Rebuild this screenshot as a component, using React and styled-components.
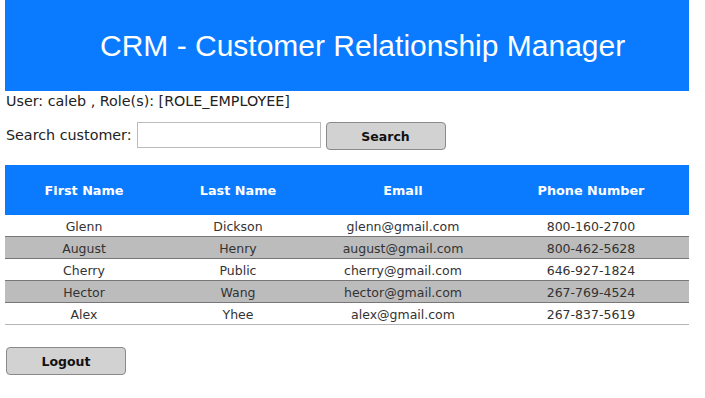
import React from 'react'
import styled, { createGlobalStyle } from 'styled-components'

const GlobalStyle = createGlobalStyle`
  body {
    margin: 0;
    background: #fff;
    font-family: "DejaVu Sans", Verdana, sans-serif;
    color: #222;
  }
`

const Page = styled.div`
  width: 684px;
  padding-left: 5px;
`

const Header = styled.header`
  background: #0a7bff;
  height: 91px;
  display: flex;
  align-items: center;
  padding-left: 95px;
`

const Title = styled.h1`
  margin: 0;
  font-family: "Liberation Sans", Arial, sans-serif;
  font-weight: 400;
  font-size: 30px;
  color: #fff;
`

const UserLine = styled.div`
  font-size: 14.3px;
  padding: 2px 0 0 1px;
  height: 21px;
`

const SearchForm = styled.form`
  display: flex;
  align-items: flex-start;
  margin-top: 8px;
  padding-left: 1px;
  font-size: 14.3px;
`

const Label = styled.label`
  line-height: 26px;
  margin-right: 5px;
`

const SearchInput = styled.input`
  width: 184px;
  height: 26px;
  box-sizing: border-box;
  border: 1px solid #bbb;
  margin: 0 5px 0 0;
`

const Button = styled.button`
  width: 120px;
  height: 28px;
  background: #d2d2d2;
  border: 1px solid #8a8a8a;
  border-radius: 4px;
  font-family: "DejaVu Sans", Verdana, sans-serif;
  font-weight: 700;
  font-size: 12.5px;
  color: #111;
`

const Table = styled.table`
  width: 684px;
  border-collapse: collapse;
  margin-top: 15px;
  font-size: 12.5px;
  table-layout: fixed;
`

const HeadCell = styled.th`
  background: #0a7bff;
  color: #fff;
  height: 50px;
  padding: 0;
  font-size: 12.8px;
  font-weight: 700;
  width: ${p => p.$w}px;
`

const Row = styled.tr`
  background: ${p => (p.$odd ? '#bcbcbc' : '#fff')};
  border-bottom: 1px solid ${p => (p.$last ? '#b5b5b5' : '#777')};
`

const Cell = styled.td`
  text-align: center;
  height: 20px;
  padding: 1px 0 0;
  color: #333;
`

const Footer = styled.div`
  margin-top: 22px;
  padding-left: 1px;
`

const columns = [
  { label: 'First Name', w: 158 },
  { label: 'Last Name', w: 150 },
  { label: 'Email', w: 180 },
  { label: 'Phone Number', w: 196 },
]

const customers = [
  ['Glenn', 'Dickson', 'glenn@gmail.com', '800-160-2700'],
  ['August', 'Henry', 'august@gmail.com', '800-462-5628'],
  ['Cherry', 'Public', 'cherry@gmail.com', '646-927-1824'],
  ['Hector', 'Wang', 'hector@gmail.com', '267-769-4524'],
  ['Alex', 'Yhee', 'alex@gmail.com', '267-837-5619'],
]

const App = () => {
  return (
    <Page>
      <GlobalStyle />
      <Header>
        <Title>CRM - Customer Relationship Manager</Title>
      </Header>
      <UserLine>User: caleb , Role(s): [ROLE_EMPLOYEE]</UserLine>
      <SearchForm onSubmit={e => e.preventDefault()}>
        <Label>Search customer:</Label>
        <SearchInput type="text" />
        <Button type="submit">Search</Button>
      </SearchForm>
      <Table>
        <thead>
          <tr>
            {columns.map(c => (
              <HeadCell key={c.label} $w={c.w}>{c.label}</HeadCell>
            ))}
          </tr>
        </thead>
        <tbody>
          {customers.map((row, i) => (
            <Row key={row[2]} $odd={i % 2 === 1} $last={i === customers.length - 1}>
              {row.map(v => (
                <Cell key={v}>{v}</Cell>
              ))}
            </Row>
          ))}
        </tbody>
      </Table>
      <Footer>
        <Button type="button">Logout</Button>
      </Footer>
    </Page>
  )
}

export default App
